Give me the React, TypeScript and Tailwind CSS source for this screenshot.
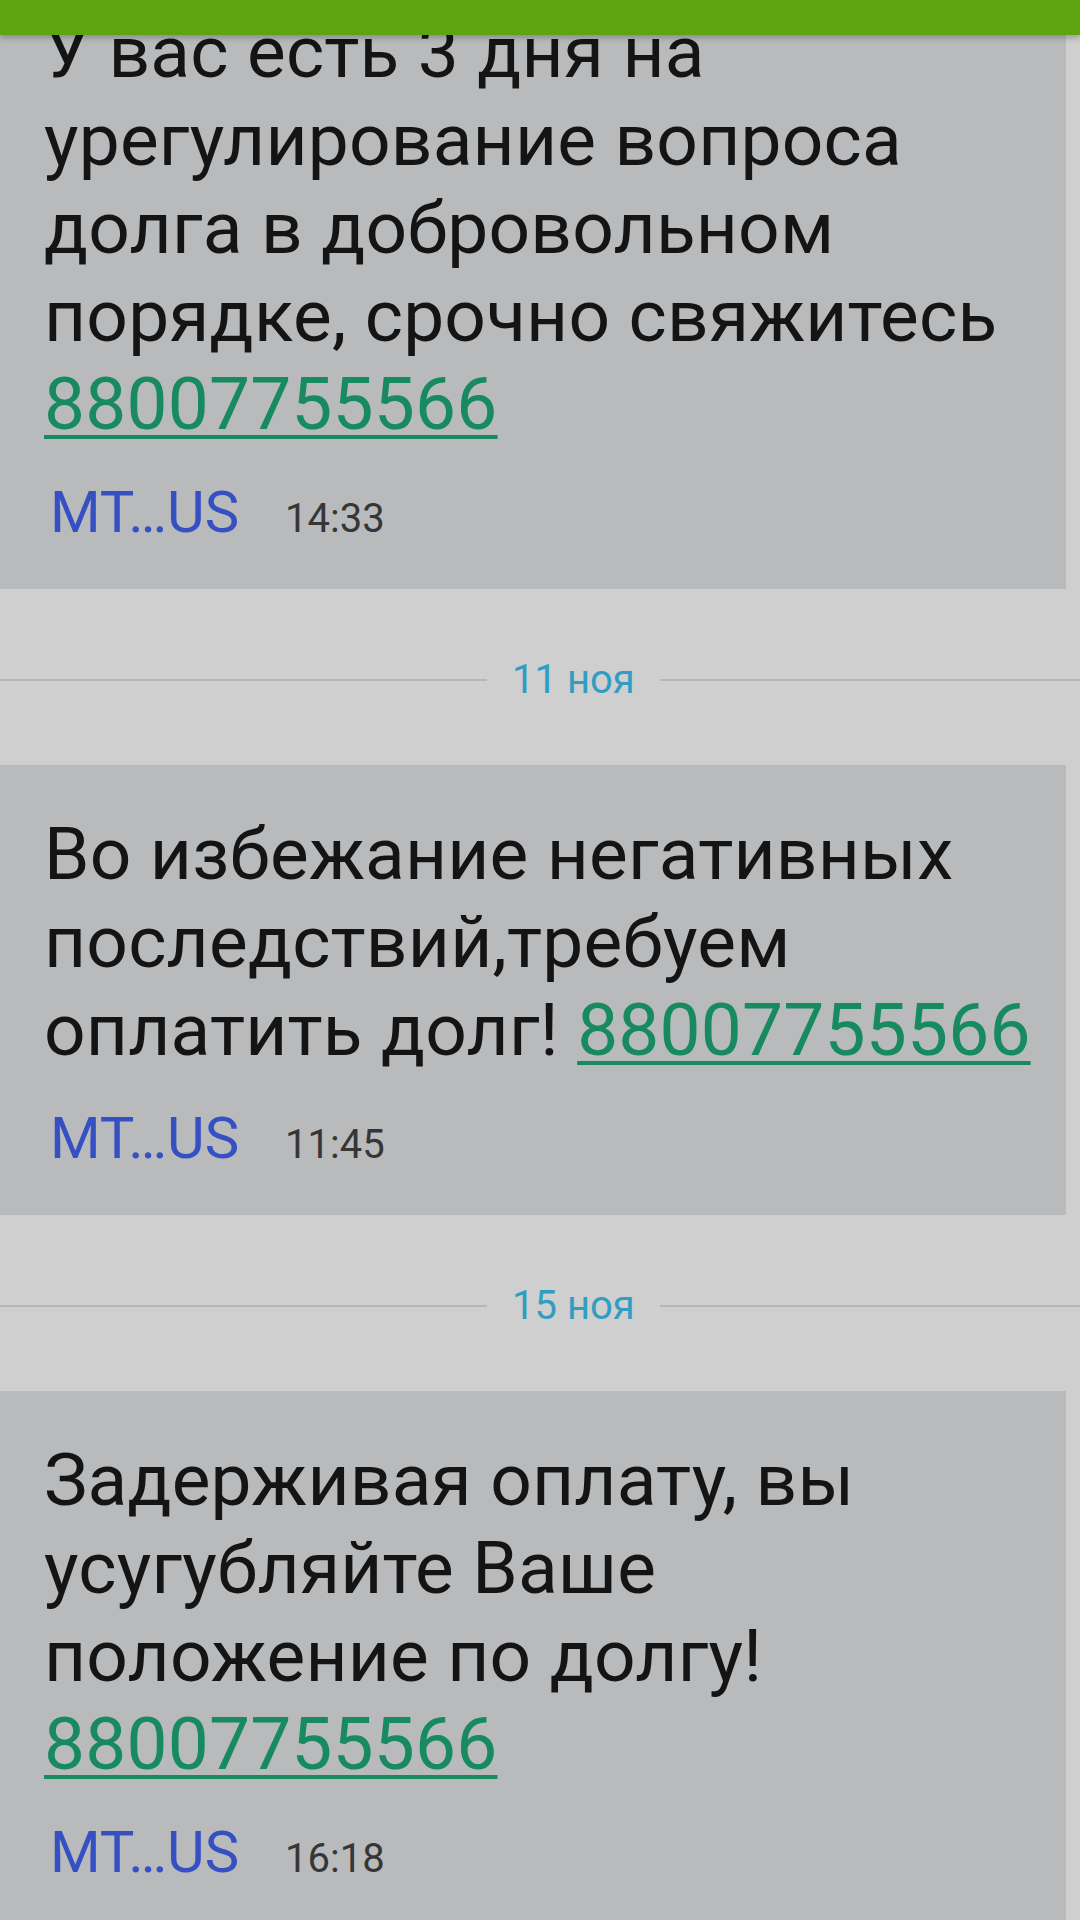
import React from "react";

type Msg = {
  lines: string[];
  phoneInline?: boolean;
  time: string;
};

const PHONE = "88007755566";

const messages: { date?: string; msg: Msg }[] = [
  {
    msg: {
      lines: ["У вас есть 3 дня на", "урегулирование вопроса", "долга в добровольном", "порядке, срочно свяжитесь"],
      time: "14:33",
    },
  },
  {
    date: "11 ноя",
    msg: {
      lines: ["Во избежание негативных", "последствий,требуем", "оплатить долг!"],
      phoneInline: true,
      time: "11:45",
    },
  },
  {
    date: "15 ноя",
    msg: {
      lines: ["Задерживая оплату, вы", "усугубляйте Ваше", "положение по долгу!"],
      time: "16:18",
    },
  },
];

function Phone() {
  return (
    <span className="text-[#178a60] underline decoration-[4px] underline-offset-[6px]">{PHONE}</span>
  );
}

function DateSeparator({ label }: { label: string }) {
  return (
    <div className="pt-[71px] pb-[65px]">
      <div className="flex h-[40px] items-center">
        <div className="h-[2px] w-[487px] bg-[#b6b6b6]" />
        <span className="px-[25px] text-[40px] leading-[40px] text-[#2f9ec2]">{label}</span>
        <div className="h-[2px] flex-1 bg-[#b6b6b6]" />
      </div>
    </div>
  );
}

function Bubble({ msg }: { msg: Msg }) {
  const last = msg.lines.length - 1;
  return (
    <div className="w-[1066px] bg-[#b9babc] pl-[44px] pt-[45px] pb-[45px]">
      <div className="text-[73px] leading-[88px] tracking-[0.2px] text-[#141414]">
        {msg.lines.map((line, i) => (
          <div key={i} className="whitespace-nowrap">
            {line}
            {msg.phoneInline && i === last && (
              <>
                {" "}
                <Phone />
              </>
            )}
          </div>
        ))}
        {!msg.phoneInline && (
          <div className="whitespace-nowrap">
            <Phone />
          </div>
        )}
      </div>
      <div className="mt-[32px] flex h-[64px] items-baseline leading-[64px]">
        <span className="pl-[6px] text-[58px] text-[#3550c2]">MT…US</span>
        <span className="ml-[46px] text-[40px] text-[#363636]">{msg.time}</span>
      </div>
    </div>
  );
}

export default function App() {
  return (
    <div className="relative h-[1920px] w-[1080px] overflow-hidden bg-[#cfcfcf] font-['Roboto','Noto_Sans',sans-serif]">
      <div className="absolute left-0 right-0 top-0 z-10 h-[35px] bg-[#5fa312] shadow-[0_3px_6px_rgba(0,0,0,0.25)]" />
      <div className="-mt-[37px] flex flex-col">
        {messages.map((m, i) => (
          <React.Fragment key={i}>
            {m.date && <DateSeparator label={m.date} />}
            <Bubble msg={m.msg} />
          </React.Fragment>
        ))}
      </div>
    </div>
  );
}
